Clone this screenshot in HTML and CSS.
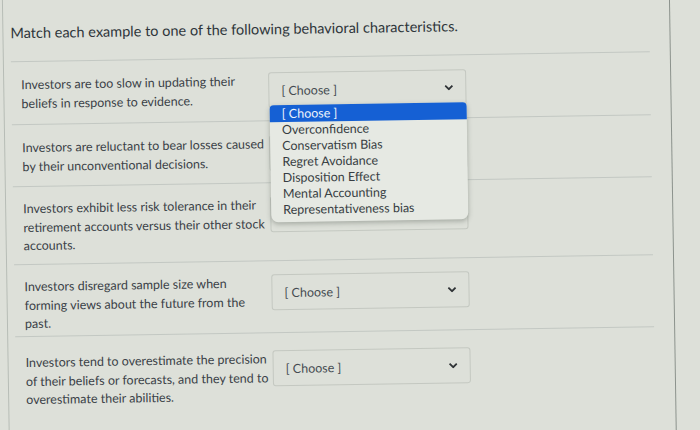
FILE: index.html
```html
<!DOCTYPE html>
<html>
<head>
<meta charset="utf-8">
<link rel="stylesheet" href="styles.css">
</head>
<body>
<div class="page">
  <div class="panel">
    <div class="question">Match each example to one of the following behavioral characteristics.</div>
    <div class="rows">
      <div class="row r1">
        <div class="prompt">Investors are too slow in updating their beliefs in response to evidence.</div>
        <div class="answer">
          <div class="select"><span>[ Choose ]</span><svg class="chev" viewBox="0 0 10 6" width="9" height="6"><path d="M1 1 L5 5 L9 1" fill="none" stroke="#2f3336" stroke-width="2"/></svg></div>
          <ul class="list">
            <li class="sel">[ Choose ]</li>
            <li>Overconfidence</li>
            <li>Conservatism Bias</li>
            <li>Regret Avoidance</li>
            <li>Disposition Effect</li>
            <li>Mental Accounting</li>
            <li>Representativeness bias</li>
          </ul>
        </div>
      </div>
      <div class="row r2">
        <div class="prompt">Investors are reluctant to bear losses caused by their unconventional decisions.</div>
        <div class="answer">
          <div class="select"><span>[ Choose ]</span><svg class="chev" viewBox="0 0 10 6" width="9" height="6"><path d="M1 1 L5 5 L9 1" fill="none" stroke="#2f3336" stroke-width="2"/></svg></div>
        </div>
      </div>
      <div class="row r3">
        <div class="prompt">Investors exhibit less risk tolerance in their retirement accounts versus their other stock accounts.</div>
        <div class="answer">
          <div class="select"><span>[ Choose ]</span><svg class="chev" viewBox="0 0 10 6" width="9" height="6"><path d="M1 1 L5 5 L9 1" fill="none" stroke="#2f3336" stroke-width="2"/></svg></div>
        </div>
      </div>
      <div class="row r4">
        <div class="prompt">Investors disregard sample size when forming views about the future from the past.</div>
        <div class="answer">
          <div class="select"><span>[ Choose ]</span><svg class="chev" viewBox="0 0 10 6" width="9" height="6"><path d="M1 1 L5 5 L9 1" fill="none" stroke="#2f3336" stroke-width="2"/></svg></div>
        </div>
      </div>
      <div class="row r5">
        <div class="prompt">Investors tend to overestimate the precision of their beliefs or forecasts, and they tend to overestimate their abilities.</div>
        <div class="answer">
          <div class="select"><span>[ Choose ]</span><svg class="chev" viewBox="0 0 10 6" width="9" height="6"><path d="M1 1 L5 5 L9 1" fill="none" stroke="#2f3336" stroke-width="2"/></svg></div>
        </div>
      </div>
    </div>
  </div>
</div>
</body>
</html>
```
FILE: styles.css
```css
html, body {
  margin: 0;
  padding: 0;
  background: #dde0d9;
  overflow: hidden;
}
body {
  width: 700px;
  height: 430px;
  font-family: Lato, "Open Sans", sans-serif;
  color: #3a4147;
}
.page {
  width: 700px;
  height: 430px;
  overflow: visible;
  transform: rotate(-0.9deg);
  transform-origin: 350px 215px;
}
.panel {
  margin-left: 5px;
  width: 668px;
  height: 470px;
  margin-top: -20px;
  padding-top: 20px;
  border-left: 1px solid #b7bcb6;
  border-right: 1px solid #8c928d;
  box-sizing: border-box;
  overflow: hidden;
}
.question {
  font-size: 14.5px;
  line-height: 18px;
  padding: 19px 0 0 7px;
  height: 56px;
  box-sizing: border-box;
  color: #2f363b;
}
.rows {
  margin: 0 20px 0 7px;
}
.row {
  display: flex;
  border-top: 1px solid #c3c8c3;
  padding: 14px 0 8px 10px;
  gap: 1px;
  align-items: flex-start;
}
.r1 { height: 40px; }
.r2 { height: 39px; }
.r3 { height: 56px; padding-top: 13px; }
.r4 { height: 50px; padding-top: 13px; }
.r5 { padding-top: 17px; }
.prompt {
  width: 246px;
  font-size: 12.5px;
  line-height: 18.5px;
}
.answer {
  position: relative;
  width: 198px;
}
.select {
  height: 34px;
  border: 1px solid #c4c8c1;
  border-radius: 3px;
  display: flex;
  align-items: center;
  justify-content: space-between;
  padding: 0 12px 0 12px;
  font-size: 12.5px;
  color: #454c51;
}
.list {
  position: absolute;
  top: 33px;
  left: 1px;
  width: 197px;
  margin: 0;
  padding: 0 0 4px 0;
  list-style: none;
  background: #e6e9e3;
  border-radius: 4px 4px 7px 7px;
  box-shadow: 0 2px 5px rgba(60, 70, 60, 0.35);
  font-size: 12.5px;
  line-height: 16px;
  color: #373d42;
  z-index: 2;
}
.list li {
  padding-left: 12px;
}
.list li.sel {
  background: #1560d4;
  color: #eef3fb;
  border-radius: 4px 4px 0 0;
  line-height: 17px;
}
```
